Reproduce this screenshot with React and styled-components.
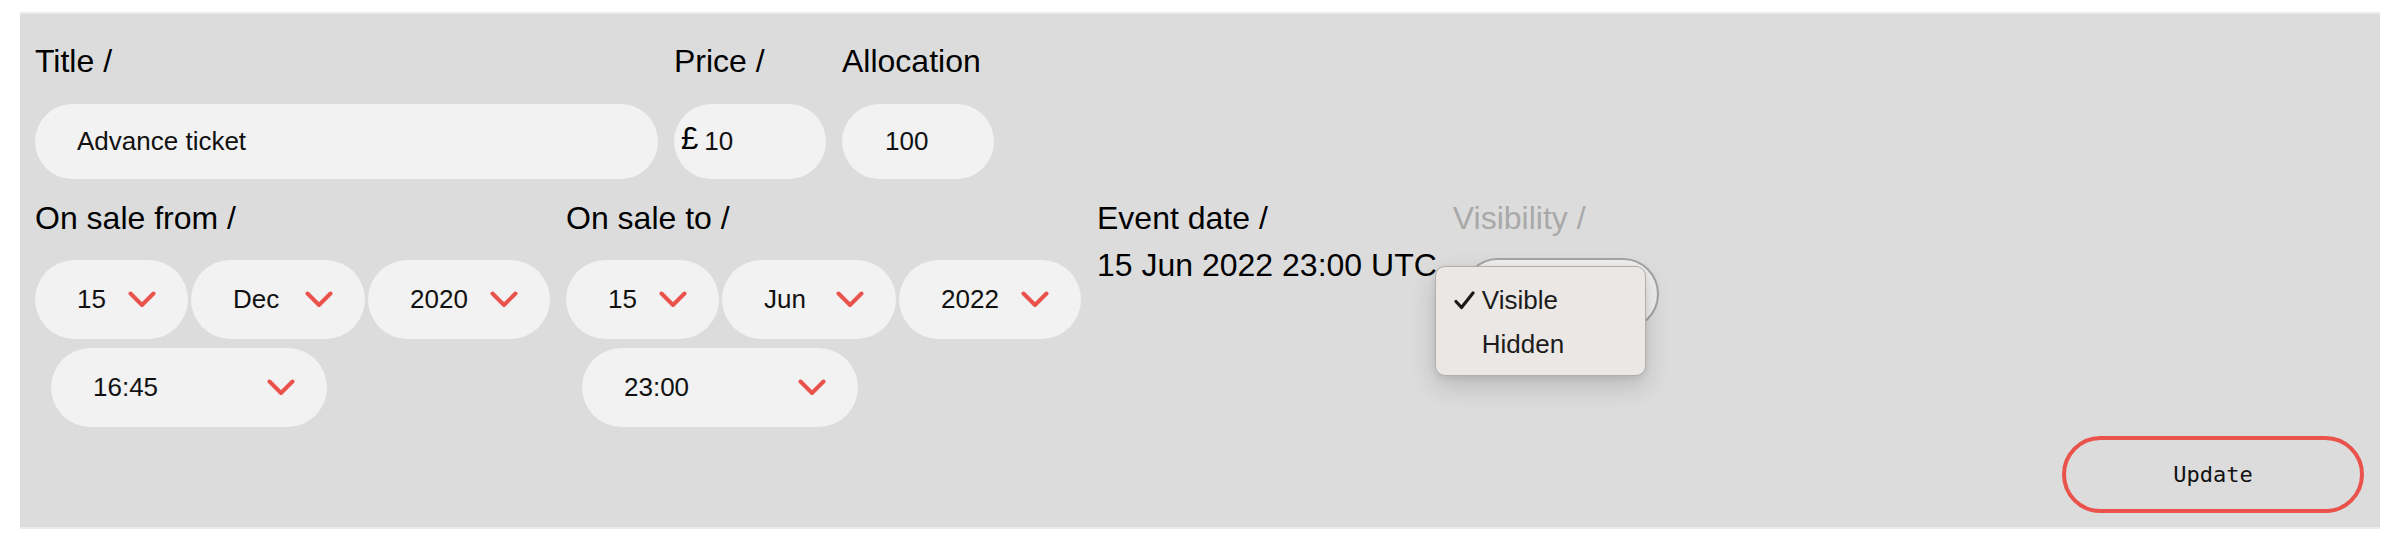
import React from 'react';
import styled, { createGlobalStyle } from 'styled-components';

const GlobalStyle = createGlobalStyle`
  html, body { margin: 0; padding: 0; background: #fff; }
  body { font-family: "Liberation Sans", Arial, Helvetica, sans-serif; color: #000; }
  * { box-sizing: border-box; }
`;

const Page = styled.div`
  padding: 12px 18px 14px 20px;
`;

const Panel = styled.form`
  display: flex;
  flex-direction: column;
  background: #dcdcdc;
  border-top: 2px solid #ebebeb;
  border-bottom: 2px solid #ebebeb;
  padding: 29px 16px 14px 15px;
`;

const Row = styled.div`
  display: flex;
  align-items: flex-start;
  gap: 16px;
  margin-top: ${(p) => p.$mt || 0}px;
`;

const Field = styled.div`
  display: flex;
  flex-direction: column;
  align-items: flex-start;
  width: ${(p) => (p.$w ? `${p.$w}px` : 'auto')};
  flex-shrink: 0;
`;

const Label = styled.label`
  font-size: 32px;
  line-height: 37px;
  color: ${(p) => (p.$muted ? '#a9a9a9' : '#000')};
  margin-bottom: ${(p) => (p.$mb !== undefined ? p.$mb : 24)}px;
  white-space: nowrap;
`;

const TextInput = styled.input`
  width: 100%;
  height: 75px;
  border: none;
  outline: none;
  border-radius: 38px;
  background: #f2f2f2;
  font-family: "Liberation Sans", Arial, sans-serif;
  font-size: 26px;
  color: #111;
  padding: 0 0 0 ${(p) => p.$pl || 42}px;
`;

const PriceBox = styled.div`
  display: flex;
  align-items: center;
  width: 100%;
  height: 75px;
  border-radius: 38px;
  background: #f2f2f2;
  padding-left: 7px;
`;

const Prefix = styled.span`
  font-size: 31px;
  line-height: 1;
  color: #000;
  margin-right: 6px;
  margin-top: -6px;
`;

const BareInput = styled.input`
  flex: 1;
  min-width: 0;
  border: none;
  outline: none;
  background: transparent;
  font-family: "Liberation Sans", Arial, sans-serif;
  font-size: 26px;
  color: #111;
  padding: 0;
`;

const DateGroup = styled.div`
  display: flex;
  flex-direction: column;
  gap: 9px;
`;

const DateRow = styled.div`
  display: flex;
  gap: 3px;
  padding-left: ${(p) => p.$indent || 0}px;
`;

const SelectBox = styled.div`
  display: flex;
  align-items: center;
  justify-content: space-between;
  flex-shrink: 0;
  width: ${(p) => p.$w}px;
  height: 79px;
  border-radius: 40px;
  background: #f2f2f2;
  padding: 0 32px 0 42px;
  font-size: 26px;
  color: #111;
  cursor: pointer;
`;

const Value = styled.div`
  font-size: 32px;
  line-height: 37px;
  white-space: nowrap;
`;

const VisAnchor = styled.div`
  position: relative;
  margin-left: 9px;
  margin-top: -2px;
`;

const VisSelect = styled.div`
  width: 197px;
  height: 72px;
  border: 2px solid #a3a3a3;
  border-radius: 36px;
  background: #efefef;
`;

const Menu = styled.ul`
  position: absolute;
  left: -27px;
  top: 8px;
  width: 211px;
  margin: 0;
  padding: 11px 0 9px;
  list-style: none;
  background: #ebe7e4;
  border: 1px solid #b1aeac;
  border-radius: 10px;
  box-shadow: 0 10px 26px rgba(0, 0, 0, 0.16), 0 2px 6px rgba(0, 0, 0, 0.08);
  z-index: 5;
`;

const MenuItem = styled.li`
  display: flex;
  align-items: center;
  height: 44px;
  padding-left: 18px;
  font-size: 26px;
  color: #1c1c1c;
`;

const CheckSlot = styled.span`
  display: inline-flex;
  width: 28px;
  align-items: center;
`;

const Footer = styled.div`
  display: flex;
  justify-content: flex-end;
  margin-top: 9px;
`;

const UpdateButton = styled.button`
  width: 302px;
  height: 77px;
  border: 4px solid #e9534c;
  border-radius: 40px;
  background: transparent;
  font-family: "DejaVu Sans Mono", "Liberation Mono", monospace;
  font-size: 22px;
  color: #111;
  cursor: pointer;
`;

const Chevron = () => (
  <svg width="28" height="17" viewBox="0 0 28 17" fill="none">
    <path d="M2.5 2.5 L14 14 L25.5 2.5" stroke="#e9534c" strokeWidth="4" strokeLinecap="round" strokeLinejoin="round" />
  </svg>
);

const Check = () => (
  <svg width="21" height="19" viewBox="0 0 21 19" fill="none">
    <path d="M2 10.5 L7.5 16.5 L19 2" stroke="#1a1a1a" strokeWidth="3.2" strokeLinecap="round" strokeLinejoin="round" />
  </svg>
);

const Select = ({ w, value }) => (
  <SelectBox $w={w}>
    <span>{value}</span>
    <Chevron />
  </SelectBox>
);

const DateTimePicker = ({ day, month, year, time }) => (
  <DateGroup>
    <DateRow>
      <Select w={153} value={day} />
      <Select w={174} value={month} />
      <Select w={182} value={year} />
    </DateRow>
    <DateRow $indent={16}>
      <Select w={276} value={time} />
    </DateRow>
  </DateGroup>
);

export default function App() {
  return (
    <Page>
      <GlobalStyle />
      <Panel onSubmit={(e) => e.preventDefault()}>
        <Row>
          <Field $w={623}>
            <Label>Title /</Label>
            <TextInput defaultValue="Advance ticket" />
          </Field>
          <Field $w={152}>
            <Label>Price /</Label>
            <PriceBox>
              <Prefix>£</Prefix>
              <BareInput defaultValue="10" />
            </PriceBox>
          </Field>
          <Field $w={152}>
            <Label>Allocation</Label>
            <TextInput defaultValue="100" $pl={43} />
          </Field>
        </Row>
        <Row $mt={21}>
          <Field>
            <Label $mb={23}>On sale from /</Label>
            <DateTimePicker day="15" month="Dec" year="2020" time="16:45" />
          </Field>
          <Field>
            <Label $mb={23}>On sale to /</Label>
            <DateTimePicker day="15" month="Jun" year="2022" time="23:00" />
          </Field>
          <Field>
            <Label $mb={10}>Event date /</Label>
            <Value>15 Jun 2022 23:00 UTC</Value>
          </Field>
          <Field>
            <Label $muted $mb={23}>Visibility /</Label>
            <VisAnchor>
              <VisSelect />
              <Menu>
                <MenuItem>
                  <CheckSlot><Check /></CheckSlot>
                  Visible
                </MenuItem>
                <MenuItem>
                  <CheckSlot />
                  Hidden
                </MenuItem>
              </Menu>
            </VisAnchor>
          </Field>
        </Row>
        <Footer>
          <UpdateButton type="submit">Update</UpdateButton>
        </Footer>
      </Panel>
    </Page>
  );
}
